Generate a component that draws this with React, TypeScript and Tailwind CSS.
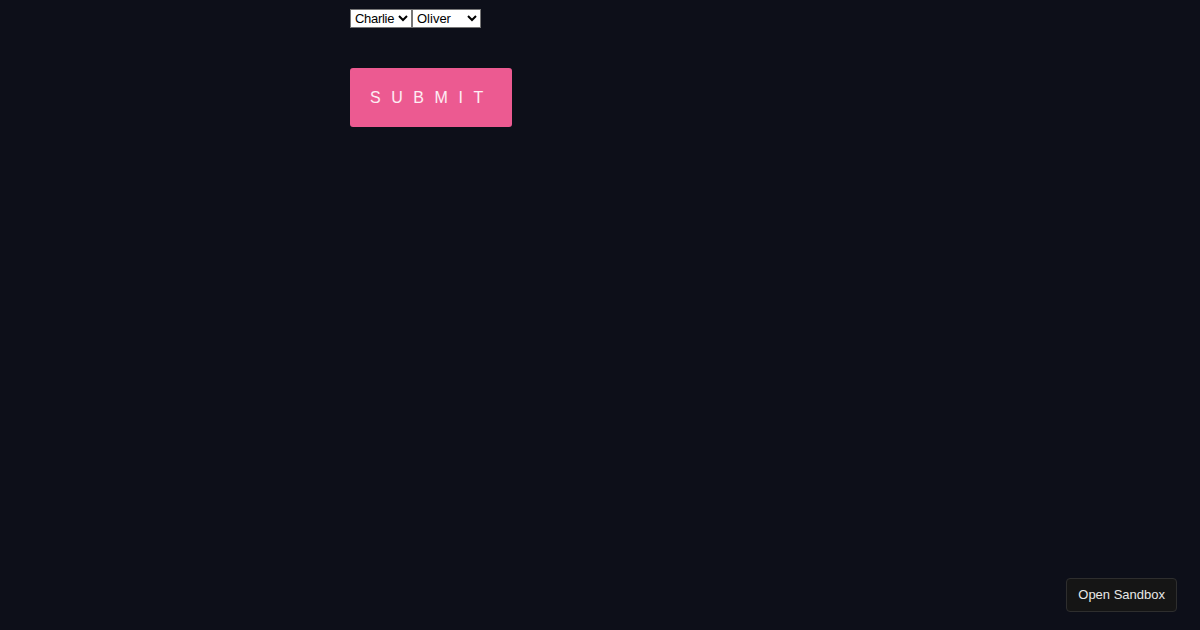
import { useState } from "react";

const first = ["Charlie", "Alice", "Bob"];
const second = ["Oliver", "Amelia", "Harry"];

export default function App() {
  const [a, setA] = useState(first[0]);
  const [b, setB] = useState(second[0]);

  return (
    <div className="relative min-h-[630px] w-full bg-[#0d0f19] font-['Liberation_Sans',Arial,sans-serif]">
      <div className="mx-auto w-[500px] pt-[9px]">
        <div className="flex">
          <select
            value={a}
            onChange={(e) => setA(e.target.value)}
            className="h-[19px] w-[62px] border border-[#767676] bg-white text-[13px] tracking-[-0.3px] text-black"
          >
            {first.map((n) => (
              <option key={n}>{n}</option>
            ))}
          </select>
          <select
            value={b}
            onChange={(e) => setB(e.target.value)}
            className="h-[19px] w-[69px] border border-[#767676] bg-white text-[13px] text-black"
          >
            {second.map((n) => (
              <option key={n}>{n}</option>
            ))}
          </select>
        </div>
        <button className="mt-10 flex h-[59px] w-[162px] items-center rounded-[3px] bg-[#ec5a91] pl-5 text-[16px] uppercase tracking-[0.66em] text-white/90">
          Submit
        </button>
      </div>
      <button className="absolute bottom-[18px] right-[23px] h-[34px] rounded-[4px] border border-[#2e2e2e] bg-[#151515] px-[11px] text-[13px] text-[#e8e8e8]">
        Open Sandbox
      </button>
    </div>
  );
}
